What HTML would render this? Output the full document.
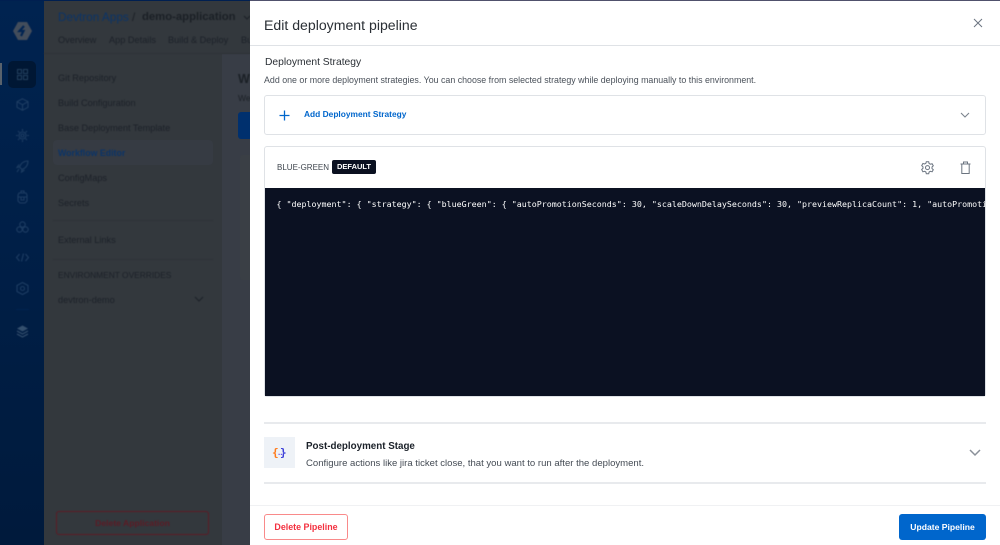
<!DOCTYPE html>
<html lang="en">
<head>
<meta charset="utf-8">
<title>Edit deployment pipeline</title>
<style>
html,body{margin:0;padding:0}
body{width:1000px;height:545px;overflow:hidden;position:relative;background:#33383d;font-family:"Liberation Sans",sans-serif}
.a{position:absolute;white-space:nowrap}
#bg{position:absolute;left:0;top:0;width:250px;height:545px;overflow:hidden;background:#33383d}
#blur{position:absolute;left:0;top:0;width:250px;height:545px;filter:blur(.5px)}
#side{position:absolute;left:0;top:0;width:44px;height:545px;background:linear-gradient(#002350,#001a3c)}
.n{color:#1c2129;font-size:9.2px;line-height:12px}
svg{position:absolute;overflow:visible}
#panel{position:absolute;left:250px;top:0;width:750px;height:545px;background:#fff;border-top:1px solid #50516c;box-sizing:border-box}
#p{position:absolute;left:-250px;top:-1px;width:1000px;height:545px}
.g{fill:none;stroke:#1d3d63;stroke-width:1.1}
</style>
</head>
<body>
<div id="bg">
<div class="a" style="left:222px;top:54px;width:28px;height:491px;background:#383d46"></div>
<div id="side"></div>
<div class="a" style="left:0;top:0;width:250px;height:1px;background:#001f50"></div>
<div class="a" style="left:0;top:63px;width:2px;height:22px;background:#59626c"></div>
<div class="a" style="left:8px;top:61px;width:28px;height:27px;border-radius:5px;background:#001734"></div>
<div class="a" style="left:53px;top:140px;width:160px;height:25px;border-radius:4px;background:#363b43"></div>
<div class="a" style="left:238px;top:112px;width:12px;height:27px;border-radius:3px 0 0 3px;background:#00306e"></div>
<div class="a" style="left:240px;top:155px;width:10px;height:125px;background:#3a3f45;border-radius:3px 0 0 3px"></div>
<div id="blur">
<svg style="left:12px;top:21px" width="21" height="20" viewBox="0 0 21 20"><path d="M6 1h9l5 9-5 9H6l-5-9z" fill="#434d5b"/><path d="M12 5 7.500 10h4L9 15" fill="none" stroke="#012452" stroke-width="2.200"/></svg>
<svg style="left:17px;top:69px" width="11" height="11" viewBox="0 0 11 11"><g fill="none" stroke="#23415f"><rect x=".5" y=".5" width="4" height="4"/><rect x="6.500" y=".5" width="4" height="4"/><rect x=".5" y="6.500" width="4" height="4"/><rect x="6.500" y="6.500" width="4" height="4"/></g></svg>
<svg style="left:16px;top:98px" width="13" height="13" viewBox="0 0 13 13"><path class="g" d="M6.500 .8 12 3.700V9.300L6.500 12.200 1 9.300V3.700zM1 3.700l5.500 3 5.500-3M6.500 6.700v5.500"/></svg>
<svg style="left:16px;top:129px" width="13" height="13" viewBox="0 0 13 13"><circle class="g" cx="6.500" cy="6.500" r="3.500"/><circle class="g" cx="6.500" cy="6.500" r="1.500"/><path class="g" d="M6.500 0v2M6.500 11v2M0 6.500h2M11 6.500h2M2 2l1.500 1.500M9.500 9.500 11 11M11 2 9.500 3.500M3.500 9.500 2 11"/></svg>
<svg style="left:16px;top:160px" width="13" height="13" viewBox="0 0 13 13"><path class="g" d="M12 1C8 1 5 3 3.500 7L6 9.500C10 8 12 5 12 1zM3.500 7 1 7.500 3 4.500M6 9.500 5.500 12 8.500 10M3 9 1 12"/></svg>
<svg style="left:17px;top:190px" width="11" height="14" viewBox="0 0 11 14"><path class="g" d="M2 3h7l1 2v6l-2 2H3l-2-2V5zM1 7h9M4 3V1h3v2M4 7v3h3V7"/></svg>
<svg style="left:16px;top:221px" width="13" height="12" viewBox="0 0 13 12"><g class="g"><circle cx="6.500" cy="3.500" r="2.700"/><circle cx="3.500" cy="8.500" r="2.700"/><circle cx="9.500" cy="8.500" r="2.700"/></g></svg>
<svg style="left:16px;top:253px" width="13" height="9" viewBox="0 0 13 9"><path class="g" d="M3.500 1 .5 4.500 3.500 8M9.500 1l3 3.500-3 3.500M7.500 .5 5.500 8.500"/></svg>
<svg style="left:16px;top:282px" width="13" height="13" viewBox="0 0 13 13"><path class="g" d="M6.500 .5 12 3.500V9.500L6.500 12.500 1 9.500V3.500z"/><circle class="g" cx="6.500" cy="6.500" r="2"/></svg>
<div class="a" style="left:16px;top:309px;width:13px;height:1px;background:#002450"></div>
<svg style="left:16px;top:325px" width="13" height="13" viewBox="0 0 13 13"><path d="M6.500 .5 12 3.500 6.500 6.500 1 3.500z" fill="#34506e"/><path class="g" d="M1 6l5.500 3L12 6M1 9l5.500 3L12 9" style="stroke:#34506e"/></svg>

<div class="a" style="left:58px;top:10px;font-size:11.800px;color:#0b3468">Devtron Apps</div>
<div class="a" style="left:132px;top:10px;font-size:11.800px;color:#1b2026">/</div>
<div class="a" style="left:142px;top:10px;font-size:11.300px;line-height:14px;font-weight:bold;color:#1b2026">demo-application</div>
<svg style="left:243px;top:15px" width="8" height="5" viewBox="0 0 8 5"><path d="M1 1l3 3 3-3" fill="none" stroke="#1b2026"/></svg>
<div class="a n" style="left:58px;top:34px">Overview</div>
<div class="a n" style="left:109px;top:34px">App Details</div>
<div class="a n" style="left:168px;top:34px">Build &amp; Deploy</div>
<div class="a n" style="left:241px;top:34px">Bu</div>
<div class="a" style="left:44px;top:53px;width:206px;height:1px;background:#2e3338"></div>

<div class="a n" style="left:58px;top:72px">Git Repository</div>
<div class="a n" style="left:58px;top:97px">Build Configuration</div>
<div class="a n" style="left:58px;top:122px">Base Deployment Template</div>
<div class="a n" style="left:58px;top:147px;color:#0b3468;font-weight:bold;font-size:8.800px">Workflow Editor</div>
<div class="a n" style="left:58px;top:172px">ConfigMaps</div>
<div class="a n" style="left:58px;top:197px">Secrets</div>
<div class="a" style="left:53px;top:220px;width:160px;height:1px;background:#2e3338"></div>
<div class="a n" style="left:58px;top:234px">External Links</div>
<div class="a" style="left:53px;top:259px;width:160px;height:1px;background:#2e3338"></div>
<div class="a" style="left:58px;top:270px;font-size:8.400px;color:#1c2129">ENVIRONMENT OVERRIDES</div>
<div class="a n" style="left:58px;top:294px">devtron-demo</div>
<svg style="left:194px;top:296px" width="10" height="6" viewBox="0 0 10 6"><path d="M1 1l4 4 4-4" fill="none" stroke="#1c2129"/></svg>
<div class="a" style="left:56px;top:511px;width:153px;height:24px;box-sizing:border-box;border:1px solid #5c1b25;border-radius:3px;color:#5c1b25;font-size:8.600px;font-weight:bold;text-align:center;line-height:23px">Delete Application</div>
<div class="a" style="left:238px;top:72px;font-size:12.500px;font-weight:bold;color:#1b2026">W</div>
<div class="a" style="left:238px;top:93px;font-size:8.500px;color:#1b2026">We</div>
</div></div>

<div id="panel"><div id="p">
<div class="a" style="left:264px;top:15px;font-size:14.100px;color:#2a2f35;line-height:20px">Edit deployment pipeline</div>
<svg style="left:973px;top:18px" width="10" height="10" viewBox="0 0 10 10"><path d="M1 1l8 8M9 1 1 9" fill="none" stroke="#6b7480" stroke-width="1"/></svg>
<div class="a" style="left:250px;top:45px;width:750px;height:1px;background:#dfe2e6"></div>

<div class="a" style="left:265px;top:55px;font-size:10.300px;color:#2a2f35;line-height:15px">Deployment Strategy</div>
<div class="a" style="left:264px;top:74px;font-size:8.850px;color:#4a515a;line-height:12px">Add one or more deployment strategies. You can choose from selected strategy while deploying manually to this environment.</div>

<div class="a" style="left:264px;top:95px;width:722px;height:40px;box-sizing:border-box;border:1px solid #dfe2e6;border-radius:3px;background:#fff"></div>
<svg style="left:279px;top:110px" width="11" height="11" viewBox="0 0 11 11"><path d="M5.500 .5v10M.5 5.500h10" fill="none" stroke="#0066cc" stroke-width="1.300"/></svg>
<div class="a" style="left:304px;top:108px;font-size:8.400px;font-weight:bold;color:#0066cc;line-height:13px">Add Deployment Strategy</div>
<svg style="left:960px;top:112px" width="10" height="6" viewBox="0 0 10 6"><path d="M1 1l4 4 4-4" fill="none" stroke="#7b838d" stroke-width="1.100"/></svg>

<div class="a" style="left:264px;top:146px;width:722px;height:251px;box-sizing:border-box;border:1px solid #dfe2e6;border-radius:3px;background:#fff"></div>
<div class="a" style="left:277px;top:162px;font-size:8px;color:#3f464e;line-height:12px">BLUE-GREEN</div>
<div class="a" style="left:332px;top:160px;width:44px;height:14px;border-radius:2px;background:#0a1020;color:#fff;font-size:7.500px;font-weight:bold;text-align:center;line-height:14px">DEFAULT</div>
<svg style="left:921px;top:161px" width="13" height="14" viewBox="0 0 13 14"><path d="M5.300 .8h2.400l.4 1.700 1.300.7 1.700-.5 1.200 2.100-1.300 1.200v1.500l1.300 1.200-1.200 2.100-1.700-.5-1.300.7-.4 1.700H5.300l-.4-1.700-1.300-.7-1.700.5L.7 8.500 2 7.300V5.800L.7 4.600l1.200-2.100 1.700.5 1.300-.7z" fill="none" stroke="#6b7480" stroke-width="1"/><circle cx="6.500" cy="6.600" r="2" fill="none" stroke="#6b7480"/></svg>
<svg style="left:960px;top:161px" width="11" height="13" viewBox="0 0 11 13"><path d="M.5 3h10M3.500 3V1h4v2M1.800 3v9.500h7.400V3" fill="none" stroke="#6b7480" stroke-width="1"/></svg>

<div class="a" style="left:265px;top:188px;width:720px;height:208px;background:#0b1122;overflow:hidden">
<div class="a" style="left:11.500px;top:10px;font-family:'DejaVu Sans Mono','Liberation Mono',monospace;font-size:8.320px;line-height:13px;color:#fff;white-space:pre">{ "deployment": { "strategy": { "blueGreen": { "autoPromotionSeconds": 30, "scaleDownDelaySeconds": 30, "previewReplicaCount": 1, "autoPromotionEnabled": false } } } }</div>
</div>

<div class="a" style="left:264px;top:422px;width:722px;height:2px;background:#e8eaed"></div>
<div class="a" style="left:264px;top:437px;width:31px;height:31px;background:#eef2f7"></div>
<div class="a" style="left:272px;top:445px;font-family:'DejaVu Sans Mono',monospace;font-size:11px;line-height:15px;font-weight:bold;color:#ff7a1a">{</div>
<div class="a" style="left:278px;top:448px;font-size:8px;line-height:10px;font-weight:bold;color:#664bee">..</div>
<div class="a" style="left:280px;top:445px;font-family:'DejaVu Sans Mono',monospace;font-size:11px;line-height:15px;font-weight:bold;color:#3b3fd8">}</div>
<div class="a" style="left:306px;top:439px;font-size:9.800px;font-weight:bold;color:#1b2129;line-height:15px">Post-deployment Stage</div>
<div class="a" style="left:306px;top:457px;font-size:9.550px;color:#444b54;line-height:14px">Configure actions like jira ticket close, that you want to run after the deployment.</div>
<svg style="left:969px;top:449px" width="12" height="8" viewBox="0 0 12 8"><path d="M1 1l5 5 5-5" fill="none" stroke="#8a9099" stroke-width="1.500"/></svg>
<div class="a" style="left:264px;top:482px;width:722px;height:2px;background:#e8eaed"></div>

<div class="a" style="left:250px;top:505px;width:750px;height:1px;background:#f0f1f3"></div>
<div class="a" style="left:264px;top:514px;width:84px;height:26px;box-sizing:border-box;border:1px solid #f98a8a;border-radius:3px;color:#f3303f;font-size:8.900px;font-weight:bold;text-align:center;line-height:24px">Delete Pipeline</div>
<div class="a" style="left:899px;top:514px;width:87px;height:26px;border-radius:3px;background:#0066cc;color:#fff;font-size:8.600px;font-weight:bold;text-align:center;line-height:26px">Update Pipeline</div>
</div></div>
</body>
</html>
